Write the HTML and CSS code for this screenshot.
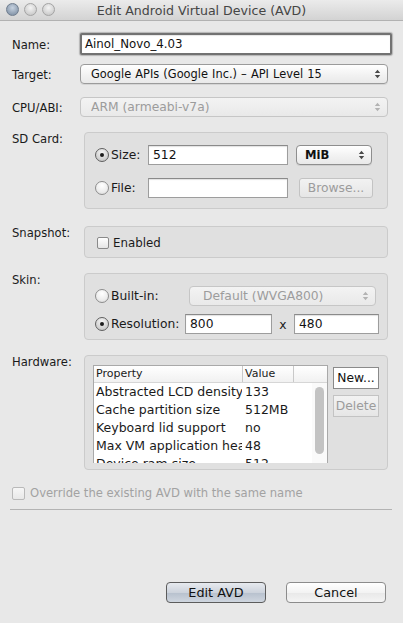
FILE: index.html
```html
<!DOCTYPE html>
<html>
<head>
<meta charset="utf-8">
<title>Edit Android Virtual Device (AVD)</title>
<link rel="stylesheet" href="styles.css">
</head>
<body>
<div class="window">
  <div class="titlebar">
    <div class="lights">
      <span class="light active"></span>
      <span class="light"></span>
      <span class="light"></span>
    </div>
    <div class="title">Edit Android Virtual Device (AVD)</div>
  </div>

  <div class="content">
    <div class="row row-name">
      <div class="label">Name:</div>
      <div class="textfield focused name-field">Ainol_Novo_4.03</div>
    </div>

    <div class="row row-target">
      <div class="label">Target:</div>
      <div class="popup target-popup">
        <span class="popup-text">Google APIs (Google Inc.) – API Level 15</span>
        <svg class="arrows" width="7" height="10" viewBox="0 0 7 10"><path d="M0.8 4 L3.5 0.8 L6.2 4 Z M0.8 6 L3.5 9.2 L6.2 6 Z"/></svg>
      </div>
    </div>

    <div class="row row-cpu">
      <div class="label">CPU/ABI:</div>
      <div class="popup disabled cpu-popup">
        <span class="popup-text">ARM (armeabi-v7a)</span>
        <svg class="arrows" width="7" height="10" viewBox="0 0 7 10"><path d="M0.8 4 L3.5 0.8 L6.2 4 Z M0.8 6 L3.5 9.2 L6.2 6 Z"/></svg>
      </div>
    </div>

    <div class="row group-row row-sd">
      <div class="label">SD Card:</div>
      <div class="group sd-group">
        <div class="grow">
          <div class="opt sd-opt"><span class="radio on"></span><span>Size:</span></div>
          <div class="textfield sd-field">512</div>
          <div class="popup mib-popup">
            <span class="popup-text">MiB</span>
            <svg class="arrows" width="7" height="10" viewBox="0 0 7 10"><path d="M0.8 4 L3.5 0.8 L6.2 4 Z M0.8 6 L3.5 9.2 L6.2 6 Z"/></svg>
          </div>
        </div>
        <div class="grow">
          <div class="opt sd-opt"><span class="radio"></span><span>File:</span></div>
          <div class="textfield sd-field"></div>
          <div class="button disabled browse-btn">Browse...</div>
        </div>
      </div>
    </div>

    <div class="row group-row row-snap">
      <div class="label">Snapshot:</div>
      <div class="group snap-group">
        <span class="checkbox"></span><span>Enabled</span>
      </div>
    </div>

    <div class="row group-row row-skin">
      <div class="label">Skin:</div>
      <div class="group skin-group">
        <div class="grow">
          <div class="opt skin-opt"><span class="radio"></span><span>Built-in:</span></div>
          <div class="popup disabled skin-popup">
            <span class="popup-text">Default (WVGA800)</span>
            <svg class="arrows" width="7" height="10" viewBox="0 0 7 10"><path d="M0.8 4 L3.5 0.8 L6.2 4 Z M0.8 6 L3.5 9.2 L6.2 6 Z"/></svg>
          </div>
        </div>
        <div class="grow">
          <div class="opt skin-opt"><span class="radio on"></span><span>Resolution:</span></div>
          <div class="textfield res-w">800</div>
          <div class="times">x</div>
          <div class="textfield res-h">480</div>
        </div>
      </div>
    </div>

    <div class="row group-row row-hw">
      <div class="label">Hardware:</div>
      <div class="group hw-group">
        <div class="table">
          <div class="thead">
            <div class="th c1">Property</div>
            <div class="th c2">Value</div>
            <div class="th c3"></div>
          </div>
          <div class="tbody">
            <div class="rows">
              <div class="tr"><div class="td c1">Abstracted LCD density</div><div class="td c2">133</div></div>
              <div class="tr"><div class="td c1">Cache partition size</div><div class="td c2">512MB</div></div>
              <div class="tr"><div class="td c1">Keyboard lid support</div><div class="td c2">no</div></div>
              <div class="tr"><div class="td c1">Max VM application heap size</div><div class="td c2">48</div></div>
              <div class="tr"><div class="td c1">Device ram size</div><div class="td c2">512</div></div>
            </div>
            <div class="vscroll"><div class="thumb"></div></div>
          </div>
        </div>
        <div class="hw-buttons">
          <div class="button new-btn">New...</div>
          <div class="button disabled del-btn">Delete</div>
        </div>
      </div>
    </div>

    <div class="override">
      <span class="checkbox disabled"></span><span>Override the existing AVD with the same name</span>
    </div>

    <div class="separator"></div>

    <div class="footer">
      <div class="button default-btn">Edit AVD</div>
      <div class="button cancel-btn">Cancel</div>
    </div>
  </div>
</div>
</body>
</html>
```

FILE: styles.css
```css
html, body {
  margin: 0;
  padding: 0;
}
body {
  background: #e8e8e8;
  font-family: "DejaVu Sans", "Liberation Sans", sans-serif;
  font-size: 12px;
  color: #1a1a1a;
}
.window {
  width: 403px;
  height: 623px;
  overflow: hidden;
  background: #e8e8e8;
}

/* Title bar */
.titlebar {
  height: 20px;
  background: linear-gradient(#ebebeb, #d3d3d3);
  border-bottom: 1px solid #b2b2b2;
  display: flex;
  align-items: center;
}
.lights {
  display: flex;
  gap: 5px;
  padding-left: 6px;
  padding-top: 1px;
  align-self: flex-start;
  margin-top: 2px;
}
.light {
  width: 11px;
  height: 11px;
  border-radius: 50%;
  border: 1px solid #a4a4a4;
  background: radial-gradient(circle at 50% 35%, #f4f4f4, #cfcfcf 70%, #bdbdbd);
}
.light.active {
  border-color: #6f7d8e;
  background: radial-gradient(circle at 50% 35%, #c6d2e0, #8d9db0 70%, #7a8a9d);
}
.title {
  flex: 1;
  text-align: center;
  font-size: 12.6px;
  color: #454545;
  margin-left: -55px;
  padding-top: 1px;
}

/* Content */
.content {
  padding: 0 11px 0 12px;
}
.row {
  display: flex;
  align-items: center;
}
.label {
  width: 68px;
  flex: none;
  font-size: 11.6px;
  color: #1a1a1a;
}
.group-row {
  align-items: flex-start;
}
.group-row .label {
  margin-top: 0;
}
.row-hw .label { margin-top: 0; }
.row-name { margin-top: 12px; }
.row-name .label { padding-top: 1px; }
.row-target { margin-top: 9px; }
.row-target .label { padding-top: 2px; }
.row-cpu { margin-top: 13px; }
.row-cpu .label { padding-top: 1px; }
.row-sd { margin-top: 15px; }
.row-snap { margin-top: 17px; }
.row-skin { margin-top: 15px; }
.row-hw { margin-top: 15px; }

/* Text fields */
.textfield {
  box-sizing: border-box;
  height: 20px;
  background: #fff;
  border: 1px solid #9d9d9d;
  border-top-color: #8a8a8a;
  box-shadow: inset 0 1px 1px rgba(0,0,0,0.12);
  font-size: 12.3px;
  line-height: 19px;
  padding-left: 4px;
  color: #111;
  white-space: nowrap;
  overflow: hidden;
}
.textfield.focused {
  height: 22px;
  border: 2px solid #727272;
  border-radius: 2px;
  box-shadow: 0 0 1px 1px rgba(90,90,90,0.35), inset 0 1px 1px rgba(0,0,0,0.1);
  line-height: 18px;
  padding-left: 3px;
  font-size: 11.8px;
}
.name-field { width: 312px; }

/* Popups */
.popup {
  box-sizing: border-box;
  height: 20px;
  display: flex;
  align-items: center;
  border: 1px solid #9b9b9b;
  border-radius: 4px;
  background: linear-gradient(#ffffff, #f2f2f2 55%, #e9e9e9);
  box-shadow: 0 1px 0 rgba(0,0,0,0.08);
  padding: 0 6px 0 10px;
  font-size: 12.3px;
  color: #111;
}
.popup-text {
  flex: 1;
  white-space: nowrap;
  overflow: hidden;
}
.target-popup .popup-text { font-size: 11.4px; word-spacing: 0.5px; }
.arrows { fill: #4a4a4a; flex: none; }
.popup.disabled {
  border-color: #c6c6c6;
  background: linear-gradient(#f3f3f3, #e9e9e9);
  color: #9c9c9c;
  box-shadow: none;
}
.popup.disabled .arrows { fill: #b3b3b3; }
.target-popup { width: 308px; }
.cpu-popup { width: 308px; height: 20px; }

/* Groups */
.group {
  box-sizing: border-box;
  width: 304px;
  margin-left: 4px;
  background: #e0e0e0;
  border: 1px solid #cbcbcb;
  border-radius: 4px;
}
.grow {
  display: flex;
  align-items: center;
  height: 21px;
}
.opt {
  display: flex;
  align-items: center;
  gap: 2px;
  flex: none;
  font-size: 12.3px;
}
.radio {
  box-sizing: border-box;
  width: 14px;
  height: 14px;
  border-radius: 50%;
  border: 1px solid #8d8d8d;
  background: radial-gradient(circle at 50% 30%, #ffffff, #ececec 60%, #d6d6d6);
  position: relative;
  flex: none;
}
.radio.on {
  border-color: #5f5f5f;
  background: radial-gradient(circle at 50% 30%, #f5f5f5, #d4d4d4 60%, #bfbfbf);
}
.radio.on::after {
  content: "";
  position: absolute;
  left: 4px;
  top: 4px;
  width: 4px;
  height: 4px;
  border-radius: 50%;
  background: #1c1c1c;
}

/* SD card */
.sd-group {
  height: 77px;
  padding: 11px 0 0 10px;
  display: flex;
  flex-direction: column;
  gap: 12px;
}
.sd-opt { width: 53px; }
.sd-field { width: 140px; height: 20px; }
.mib-popup {
  width: 76px;
  height: 20px;
  margin-left: 8px;
  padding-left: 8px;
  font-weight: bold;
  font-size: 11.6px;
  border-color: #8e8e8e;
}
.button {
  box-sizing: border-box;
  height: 20px;
  display: flex;
  align-items: center;
  justify-content: center;
  border: 1px solid #8f8f8f;
  border-radius: 3px;
  background: linear-gradient(#ffffff, #f3f3f3 50%, #e8e8e8 51%, #f4f4f4);
  font-size: 12.3px;
  color: #111;
}
.button.disabled {
  border-color: #c3c3c3;
  background: linear-gradient(#f2f2f2, #e6e6e6);
  color: #9c9c9c;
}
.browse-btn { width: 74px; margin-left: 11px; }

/* Snapshot */
.snap-group {
  height: 32px;
  display: flex;
  align-items: center;
  padding-left: 12px;
  padding-top: 2px;
  gap: 4px;
  font-size: 11.8px;
}
.checkbox {
  box-sizing: border-box;
  width: 12px;
  height: 12px;
  border: 1px solid #8a8a8a;
  border-radius: 2px;
  background: linear-gradient(#ffffff, #e6e6e6);
  flex: none;
}
.checkbox.disabled {
  border-color: #b9b9b9;
  background: linear-gradient(#f6f6f6, #e8e8e8);
}

/* Skin */
.skin-group {
  height: 67px;
  padding: 12px 0 0 10px;
  display: flex;
  flex-direction: column;
  gap: 8px;
}
.skin-group .grow { height: 20px; }
.skin-opt { width: 90px; }
.skin-popup { width: 187px; margin-left: 4px; padding-left: 13px; }
.res-w { width: 87px; }
.times { width: 22px; text-align: center; font-size: 12.3px; padding-top: 1px; }
.res-h { width: 85px; }

/* Hardware */
.hw-group {
  height: 115px;
  padding: 9px 0 0 8px;
  display: flex;
  gap: 5px;
}
.table {
  box-sizing: border-box;
  width: 235px;
  height: 98px;
  border: 1px solid #a9a9a9;
  border-bottom: none;
  background: #fff;
  overflow: hidden;
  display: flex;
  flex-direction: column;
}
.thead {
  display: flex;
  height: 16px;
  flex: none;
  background: linear-gradient(#ffffff, #f1f1f1);
  border-bottom: 1px solid #d6d6d6;
  font-size: 11px;
  line-height: 15px;
}
.th { box-sizing: border-box; padding-left: 2px; }
.th.c2 { border-left: 1px solid #c9c9c9; }
.th.c3 { border-left: 1px solid #c9c9c9; flex: 1; }
.c1 { width: 148px; flex: none; }
.c2 { width: 51px; flex: none; }
.tbody {
  display: flex;
  flex: 1;
  overflow: hidden;
}
.rows {
  flex: 1;
  overflow: hidden;
}
.tr {
  display: flex;
  height: 18px;
  line-height: 18px;
  font-size: 12.5px;
  white-space: nowrap;
}
.td { overflow: hidden; box-sizing: border-box; padding-left: 2px; }
.td.c2 { padding-left: 3px; }
.vscroll {
  width: 15px;
  flex: none;
  background: #fafafa;
}
.thumb {
  width: 9px;
  height: 67px;
  margin: 4px 0 0 3px;
  border-radius: 5px;
  background: #c3c3c3;
}
.hw-buttons {
  display: flex;
  flex-direction: column;
  gap: 6px;
  padding-top: 2px;
}
.new-btn, .del-btn {
  width: 46px;
  height: 22px;
  border-radius: 0;
}
.new-btn { border-color: #8a8a8a; background: #fff; }

/* Override + footer */
.override {
  display: flex;
  align-items: center;
  gap: 5px;
  margin-top: 16px;
  color: #a2a2a2;
  font-size: 11.6px;
}
.override .checkbox { width: 13px; height: 13px; }
.separator {
  margin: 9px 0 0 -2px;
  width: 382px;
  height: 1px;
  background: #b3b3b3;
}
.footer {
  display: flex;
  justify-content: flex-end;
  gap: 20px;
  margin-top: 72px;
  padding-right: 6px;
}
.default-btn, .cancel-btn {
  width: 100px;
  height: 21px;
  border-radius: 4px;
  font-size: 12.8px;
}
.default-btn {
  border-color: #5c5c5c;
  background: linear-gradient(#e7eaef, #cdd3dc 50%, #b7c0cd 51%, #cfd6df);
}
.cancel-btn {
  border-color: #8c8c8c;
}
```
